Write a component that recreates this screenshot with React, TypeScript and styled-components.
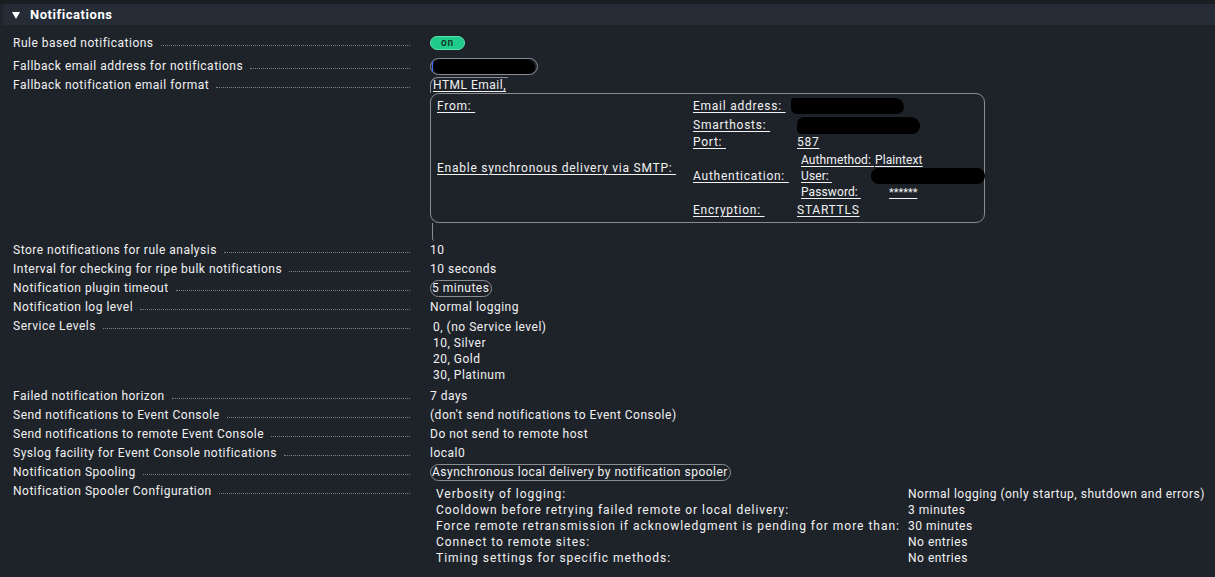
import React from "react";
import styled, { createGlobalStyle } from "styled-components";

const Global = createGlobalStyle`
  html, body { margin: 0; padding: 0; background: #1e232a; }
  body { font-family: Roboto, "Liberation Sans", sans-serif; color: #f2f2f2; font-size: 12px; }
`;

const Page = styled.div`
  width: 1215px;
  height: 577px;
  background: #1e232a;
  border-top: 4px solid #1a1d22;
  box-sizing: border-box;
  overflow: hidden;
`;

const Header = styled.div`
  height: 21px;
  margin-left: 3px;
  background: #252c36;
  border-radius: 4px 0 0 0;
  display: flex;
  align-items: center;
  gap: 10px;
  padding-left: 9px;
  font-weight: 700;
  font-size: 13px;
  color: #ffffff;
  letter-spacing: 0.55px;
`;

const Triangle = styled.span`
  width: 0;
  height: 0;
  border-left: 4px solid transparent;
  border-right: 4px solid transparent;
  border-top: 7px solid #ffffff;
  margin-top: 1px;
`;

const Body = styled.div`
  padding: 5px 0 0 13px;
`;

const Row = styled.div<{ $h?: number }>`
  display: grid;
  grid-template-columns: 397px 1fr;
  column-gap: 20px;
  min-height: ${(p) => p.$h ?? 19}px;
  align-items: start;
`;

const Label = styled.div<{ $h?: number }>`
  display: flex;
  align-items: baseline;
  height: ${(p) => p.$h ?? 19}px;
  line-height: ${(p) => p.$h ?? 19}px;
  white-space: nowrap;
  letter-spacing: 0.5px;
`;

const Dots = styled.span`
  flex: 1;
  margin-left: 7px;
  border-bottom: 1px dotted #7b8089;
  transform: translateY(-1px);
`;

const Value = styled.div<{ $h?: number }>`
  line-height: ${(p) => p.$h ?? 19}px;
  min-height: ${(p) => p.$h ?? 19}px;
  white-space: nowrap;
  letter-spacing: 0.5px;
  display: flex;
  align-items: center;
`;

const Toggle = styled.span`
  display: inline-flex;
  align-items: center;
  justify-content: center;
  width: 35px;
  height: 14px;
  box-sizing: border-box;
  background: #1ecb8b;
  border: 1px solid #5fe3ae;
  border-radius: 8px;
  color: #14241d;
  font-size: 10px;
  font-weight: 500;
  letter-spacing: 0.8px;
  margin-top: -2px;
`;

const Pill = styled.span<{ $w?: number }>`
  display: inline-flex;
  align-items: center;
  height: 17px;
  box-sizing: border-box;
  border: 1px solid #8a8d92;
  border-radius: 9px;
  padding: 0 2px 0 1px;
  ${(p) => (p.$w ? `width: ${p.$w}px;` : "")}
  line-height: 15px;
`;

const Caret = styled.span`
  width: 1px;
  height: 11px;
  background: #3f6cff;
`;

const Redacted = styled.span<{ $w: number; $h: number; $r?: string; $dx?: number; $dy?: number }>`
  display: block;
  width: ${(p) => p.$w}px;
  height: ${(p) => p.$h}px;
  background: #000;
  border-radius: ${(p) => p.$r ?? "8px"};
  margin-left: ${(p) => p.$dx ?? 0}px;
  margin-top: ${(p) => p.$dy ?? 0}px;
`;

const Column = styled.div`
  display: flex;
  flex-direction: column;
  align-items: flex-start;
`;

const FormatLine = styled.div`
  height: 16px;
  margin-top: 1px;
  display: flex;
  align-items: flex-end;
`;

const FormatPill = styled.span`
  display: inline-block;
  border-left: 1px solid #8a8d92;
  border-top: 1px solid #8a8d92;
  border-radius: 8px 0 0 0;
  padding: 0 2px 0 2px;
  line-height: 15px;
  height: 16px;
  box-sizing: border-box;
  letter-spacing: 0.5px;
`;

const U = styled.span`
  text-decoration: underline;
  text-underline-offset: 2px;
  white-space: pre;
`;

const Box = styled.div`
  width: 555px;
  height: 130px;
  box-sizing: border-box;
  border: 1px solid #8a8d92;
  border-radius: 9px;
  padding: 4px 0 0 6px;
  letter-spacing: 0.75px;
`;

const Stub = styled.div`
  width: 8px;
  height: 18px;
  margin-left: 2px;
  border-left: 1px solid #8a8d92;
  border-radius: 0 0 0 3px;
  box-sizing: border-box;
`;

const Table = styled.table<{ $pl?: number; $ls?: number }>`
  border-collapse: collapse;
  border-spacing: 0;
  margin-left: ${(p) => p.$pl ?? 0}px;
  ${(p) => (p.$ls !== undefined ? `letter-spacing: ${p.$ls}px;` : "")}
`;

const Td = styled.td<{ $w?: number; $pt?: number; $va?: string }>`
  padding: ${(p) => p.$pt ?? 0}px 0 0 0;
  line-height: 16px;
  height: 16px;
  vertical-align: ${(p) => p.$va ?? "top"};
  white-space: nowrap;
  ${(p) => (p.$w ? `width: ${p.$w}px; min-width: ${p.$w}px;` : "")}
`;

const SyncCell = styled(Td)`
  padding-top: 4px;
`;

const ListValue = styled.div<{ $pt: number; $pl: number }>`
  padding: ${(p) => p.$pt}px 0 4px ${(p) => p.$pl}px;
  line-height: 16px;
  letter-spacing: 0.5px;
  white-space: nowrap;
`;

const SpoolGrid = styled.div`
  display: grid;
  grid-template-columns: 472px auto;
  padding: 4px 0 0 6px;
  line-height: 16px;
  white-space: nowrap;
`;

const SpoolKey = styled.span`
  letter-spacing: 0.98px;
`;

const SpoolVal = styled.span`
  letter-spacing: 0.5px;
`;

const Password = styled.span`
  margin-left: 14px;
  text-decoration: underline;
  text-underline-offset: 2px;
  font-size: 11px;
  letter-spacing: 0;
`;

const simple: [string, React.ReactNode][] = [
  ["Store notifications for rule analysis", "10"],
  ["Interval for checking for ripe bulk notifications", "10 seconds"],
];

const later: [string, React.ReactNode][] = [
  ["Failed notification horizon", "7 days"],
  ["Send notifications to Event Console", "(don't send notifications to Event Console)"],
  ["Send notifications to remote Event Console", "Do not send to remote host"],
  ["Syslog facility for Event Console notifications", "local0"],
];

const spool: [string, string][] = [
  ["Verbosity of logging:", "Normal logging (only startup, shutdown and errors)"],
  ["Cooldown before retrying failed remote or local delivery:", "3 minutes"],
  ["Force remote retransmission if acknowledgment is pending for more than:", "30 minutes"],
  ["Connect to remote sites:", "No entries"],
  ["Timing settings for specific methods:", "No entries"],
];

function L({ text, h }: { text: string; h?: number }) {
  return (
    <Label $h={h}>
      {text}
      <Dots />
    </Label>
  );
}

export default function App() {
  return (
    <Page>
      <Global />
      <Header>
        <Triangle />
        Notifications
      </Header>
      <Body>
        <Row $h={27}>
          <L text="Rule based notifications" h={27} />
          <Value $h={27}>
            <Toggle>on</Toggle>
          </Value>
        </Row>
        <Row>
          <L text="Fallback email address for notifications" />
          <Value>
            <Pill $w={108}>
              <Caret />
              <Redacted $w={103} $h={15} $r="8px 9px 7px 8px" />
            </Pill>
          </Value>
        </Row>
        <Row>
          <L text="Fallback notification email format" />
          <Column>
            <FormatLine>
              <FormatPill>
                <U>HTML Email,</U>
              </FormatPill>
            </FormatLine>
            <Box>
              <Table>
                <tbody>
                  <tr>
                    <Td $w={256}>
                      <U>From: </U>
                    </Td>
                    <Td>
                      <Table>
                        <tbody>
                          <tr>
                            <Td $w={98}>
                              <U>Email address: </U>
                            </Td>
                            <Td>
                              <Redacted $w={113} $h={16} $r="3px 10px 8px 6px" />
                            </Td>
                          </tr>
                        </tbody>
                      </Table>
                    </Td>
                  </tr>
                  <tr>
                    <SyncCell $w={256} $va="middle">
                      <U>Enable synchronous delivery via SMTP: </U>
                    </SyncCell>
                    <Td>
                      <Table>
                        <tbody>
                          <tr>
                            <Td $w={104} $pt={3}>
                              <U>Smarthosts: </U>
                            </Td>
                            <Td $pt={3}>
                              <Redacted $w={123} $h={17} $r="9px 12px 10px 6px" />
                            </Td>
                          </tr>
                          <tr>
                            <Td $w={104}>
                              <U>Port: </U>
                            </Td>
                            <Td>
                              <U>587</U>
                            </Td>
                          </tr>
                          <tr>
                            <Td $w={104} $va="middle">
                              <U>Authentication: </U>
                            </Td>
                            <Td $pt={2}>
                              <Table $pl={4} $ls={0.1}>
                                <tbody>
                                  <tr>
                                    <Td $w={74}>
                                      <U>Authmethod: </U>
                                    </Td>
                                    <Td>
                                      <U>Plaintext</U>
                                    </Td>
                                  </tr>
                                  <tr>
                                    <Td $w={74}>
                                      <U>User: </U>
                                    </Td>
                                    <Td>
                                      <Redacted $w={114} $h={16} $r="8px" $dx={-4} />
                                    </Td>
                                  </tr>
                                  <tr>
                                    <Td $w={74}>
                                      <U>Password: </U>
                                    </Td>
                                    <Td>
                                      <Password>******</Password>
                                    </Td>
                                  </tr>
                                </tbody>
                              </Table>
                            </Td>
                          </tr>
                          <tr>
                            <Td $w={104} $pt={1}>
                              <U>Encryption: </U>
                            </Td>
                            <Td $pt={1}>
                              <U>STARTTLS</U>
                            </Td>
                          </tr>
                        </tbody>
                      </Table>
                    </Td>
                  </tr>
                </tbody>
              </Table>
            </Box>
            <Stub />
          </Column>
        </Row>
        {simple.map(([k, v]) => (
          <Row key={k}>
            <L text={k} />
            <Value>{v}</Value>
          </Row>
        ))}
        <Row>
          <L text="Notification plugin timeout" />
          <Value>
            <Pill>5 minutes</Pill>
          </Value>
        </Row>
        <Row>
          <L text="Notification log level" />
          <Value>Normal logging</Value>
        </Row>
        <Row>
          <L text="Service Levels" />
          <ListValue $pt={2} $pl={3}>
            <div>0, (no Service level)</div>
            <div>10, Silver</div>
            <div>20, Gold</div>
            <div>30, Platinum</div>
          </ListValue>
        </Row>
        {later.map(([k, v]) => (
          <Row key={k}>
            <L text={k} />
            <Value>{v}</Value>
          </Row>
        ))}
        <Row>
          <L text="Notification Spooling" />
          <Value>
            <Pill>Asynchronous local delivery by notification spooler</Pill>
          </Value>
        </Row>
        <Row>
          <L text="Notification Spooler Configuration" />
          <SpoolGrid>
            {spool.map(([k, v]) => (
              <React.Fragment key={k}>
                <SpoolKey>{k}</SpoolKey>
                <SpoolVal>{v}</SpoolVal>
              </React.Fragment>
            ))}
          </SpoolGrid>
        </Row>
      </Body>
    </Page>
  );
}
